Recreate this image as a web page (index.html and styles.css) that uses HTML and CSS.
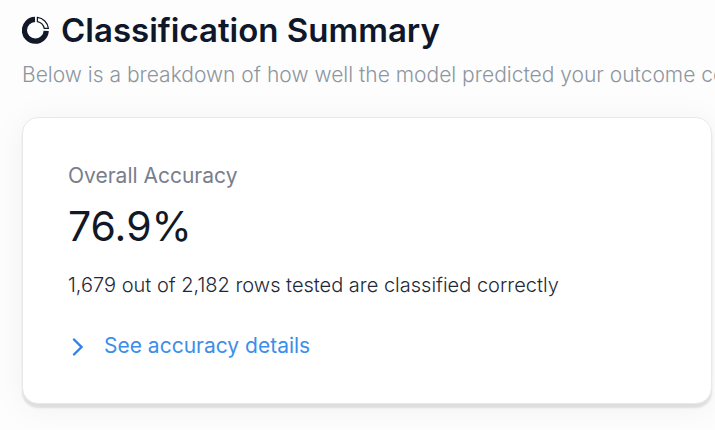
FILE: index.html
```html
<!DOCTYPE html>
<html lang="en">
  <head>
    <meta charset="UTF-8" />
    <meta name="viewport" content="width=device-width, initial-scale=1.0" />
    <title>Classification Summary</title>
    <link rel="stylesheet" href="styles.css">
  </head>
  <body>
    <main class="summary">
      <header class="summary-header">
        <h1 class="summary-title">
          <svg class="title-icon" viewBox="0 0 28 28" aria-hidden="true">
            <path d="M13 3.4A10.9 10.9 0 1 0 24.2 14.8" fill="none" stroke="#111827" stroke-width="5.2" />
            <path d="M15.4 1.4A12.6 12.6 0 0 1 26.4 12.4H22.2A8.6 8.6 0 0 0 15.4 5.6Z" fill="none" stroke="#111827" stroke-width="1.2" />
          </svg>
          Classification Summary
        </h1>
        <p class="summary-text">Below is a breakdown of how well the model predicted your outcome column</p>
      </header>
      <section class="card">
        <h2 class="card-label">Overall Accuracy</h2>
        <p class="card-value">76.9%</p>
        <p class="card-note">1,679 out of 2,182 rows tested are classified correctly</p>
        <a class="card-link" href="#details">
          <svg class="link-icon" viewBox="0 0 20 20" aria-hidden="true">
            <path d="M6 3.5L13.5 11L6 18.5" fill="none" stroke="#3182e6" stroke-width="2.4" stroke-linecap="round" />
          </svg>
          See accuracy details
        </a>
      </section>
    </main>
  </body>
</html>
```

FILE: styles.css
```css
body {
  margin: 0;
  background: #fdfdfd;
  font-family: Inter, "Liberation Sans", sans-serif;
}

h1,
h2,
p {
  margin: 0;
}

.summary {
  padding: 8px 0 24px 22px;
}

.summary-header {
  margin-bottom: 28px;
}

.summary-title {
  display: flex;
  align-items: center;
  gap: 11px;
  color: #0f172a;
  font-size: 33px;
  font-weight: 600;
  line-height: 44px;
}

.title-icon {
  width: 28px;
  height: 28px;
}

.summary-text {
  margin-top: 8px;
  color: #8d969f;
  font-size: 21px;
  font-weight: 300;
  line-height: 29px;
  white-space: nowrap;
  overflow: hidden;
}

.card {
  margin-right: 3px;
  padding: 43px 45px;
  border: 1px solid #e8e8e8;
  border-radius: 16px;
  background: #fff;
  box-shadow: 0 4px 2px rgba(0, 0, 0, 0.1), 0 4px 36px rgba(0, 0, 0, 0.05);
}

.card-label {
  color: #787e8b;
  font-size: 21px;
  font-weight: 400;
  line-height: 29px;
}

.card-value {
  margin-top: 8px;
  color: #111827;
  font-size: 41px;
  line-height: 56px;
}

.card-note {
  margin-top: 17px;
  color: #1f2937;
  font-size: 20px;
  font-weight: 300;
  line-height: 29px;
}

.card-link {
  display: flex;
  align-items: center;
  gap: 16px;
  width: fit-content;
  margin-top: 31px;
  color: #3b8eea;
  font-size: 21px;
  line-height: 29px;
  text-decoration: none;
}

.link-icon {
  width: 20px;
  height: 20px;
}
```
